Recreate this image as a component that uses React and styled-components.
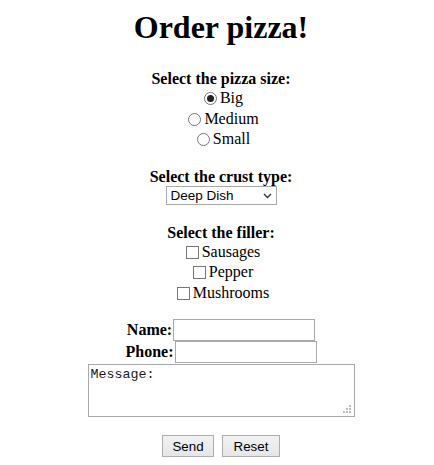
import React from "react";
import styled, { createGlobalStyle } from "styled-components";

const GlobalStyle = createGlobalStyle`
  body {
    margin: 8px;
    background: #ffffff;
    color: #000000;
    font-family: "Liberation Serif", "Times New Roman", serif;
    font-size: 16px;
  }
`;

const Page = styled.div`
  display: flex;
  flex-direction: column;
  align-items: center;
  padding: 1px 0 0 8px;
`;

const Title = styled.h1`
  font-size: 32px;
  font-weight: bold;
  line-height: 37px;
  margin: 0 0 24px;
`;

const Form = styled.form`
  display: flex;
  flex-direction: column;
  align-items: center;
  width: 100%;
`;

const Group = styled.div`
  display: flex;
  flex-direction: column;
  align-items: center;
  margin-bottom: ${({ gap }) => gap ?? 18}px;
`;

const GroupLabel = styled.b`
  display: block;
  line-height: 18px;
`;

const Option = styled.label`
  display: flex;
  align-items: center;
  height: 20.5px;
  line-height: 18px;
`;

const Radio = styled.input.attrs({ type: "radio" })`
  appearance: none;
  width: 13px;
  height: 13px;
  margin: 1px 3px 0 5px;
  border: 1px solid #767676;
  border-radius: 50%;
  background: #fff;
  box-sizing: border-box;
  position: relative;

  &:checked::after {
    content: "";
    position: absolute;
    left: 2px;
    top: 2px;
    width: 7px;
    height: 7px;
    border-radius: 50%;
    background: #222;
  }
`;

const Checkbox = styled.input.attrs({ type: "checkbox" })`
  appearance: none;
  width: 13px;
  height: 13px;
  margin: 1px 3px 0 4px;
  border: 1px solid #767676;
  border-radius: 0;
  background: #fff;
  box-sizing: border-box;
`;

const SelectWrap = styled.div`
  position: relative;
  height: 19px;

  svg {
    position: absolute;
    right: 5px;
    top: 7px;
    pointer-events: none;
  }
`;

const Select = styled.select`
  appearance: none;
  width: 111px;
  height: 19px;
  margin: 0;
  padding: 0 0 0 4px;
  border: 1px solid #a9a9a9;
  border-radius: 0;
  background: #fff;
  font-family: "Liberation Sans", Arial, sans-serif;
  font-size: 13.5px;
  color: #000;
`;

const FieldRow = styled.div`
  display: flex;
  align-items: center;
  height: 22px;
`;

const FieldLabel = styled.b`
  margin-right: 1px;
`;

const TextInput = styled.input`
  width: 142px;
  height: 22px;
  box-sizing: border-box;
  border: 1px solid #a9a9a9;
  border-radius: 0;
  padding: 1px 2px;
  font-family: "Liberation Sans", Arial, sans-serif;
  font-size: 13.33px;
  margin: 0;
`;

const Message = styled.textarea`
  width: 267px;
  height: 53px;
  box-sizing: border-box;
  margin: 1px 0 0;
  padding: 2px;
  border: 1px solid #a9a9a9;
  border-radius: 0;
  font-family: "Liberation Mono", "Courier New", monospace;
  font-size: 13.33px;
  color: #000;
  resize: both;

  &::placeholder {
    color: #1a1a1a;
    opacity: 1;
  }

  /* dotted grip in the corner */
  &::-webkit-resizer {
    background-color: #fff;
    background-image:
      linear-gradient(#bdbdbd, #bdbdbd), linear-gradient(#bdbdbd, #bdbdbd),
      linear-gradient(#bdbdbd, #bdbdbd), linear-gradient(#bdbdbd, #bdbdbd),
      linear-gradient(#bdbdbd, #bdbdbd), linear-gradient(#bdbdbd, #bdbdbd);
    background-size: 2px 2px;
    background-repeat: no-repeat;
    background-position:
      right 3px bottom 3px, right 6px bottom 3px, right 9px bottom 3px,
      right 3px bottom 6px, right 6px bottom 6px,
      right 3px bottom 9px;
  }
`;

const Buttons = styled.div`
  display: flex;
  gap: 8px;
  margin-top: 18px;
`;

const Button = styled.button`
  height: 22px;
  padding: 0;
  border: 1px solid #adadad;
  border-radius: 0;
  background: linear-gradient(#f2f2f2, #e6e6e6);
  font-family: "Liberation Sans", Arial, sans-serif;
  font-size: 13.33px;
  color: #000;
  width: ${({ w }) => w}px;
`;

const Chevron = () => (
  <svg width="9" height="6" viewBox="0 0 9 6">
    <path d="M1 1l3.5 3.5L8 1" fill="none" stroke="#333" strokeWidth="1.4" />
  </svg>
);

const sizes = ["Big", "Medium", "Small"];
const fillers = ["Sausages", "Pepper", "Mushrooms"];

export default function App() {
  return (
    <>
      <GlobalStyle />
      <Page>
        <Title>Order pizza!</Title>
        <Form onSubmit={(e) => e.preventDefault()}>
          <Group>
            <GroupLabel>Select the pizza size:</GroupLabel>
            {sizes.map((s) => (
              <Option key={s}>
                <Radio name="size" defaultChecked={s === "Big"} />
                {s}
              </Option>
            ))}
          </Group>

          <Group gap={19}>
            <GroupLabel>Select the crust type:</GroupLabel>
            <SelectWrap>
              <Select defaultValue="deep">
                <option value="deep">Deep Dish</option>
                <option value="thin">Thin Crust</option>
                <option value="classic">Classic</option>
              </Select>
              <Chevron />
            </SelectWrap>
          </Group>

          <Group gap={16}>
            <GroupLabel>Select the filler:</GroupLabel>
            {fillers.map((f) => (
              <Option key={f}>
                <Checkbox />
                {f}
              </Option>
            ))}
          </Group>

          <FieldRow>
            <FieldLabel>Name:</FieldLabel>
            <TextInput type="text" />
          </FieldRow>
          <FieldRow>
            <FieldLabel>Phone:</FieldLabel>
            <TextInput type="text" />
          </FieldRow>
          <Message placeholder="Message:" />

          <Buttons>
            <Button type="submit" w={52}>Send</Button>
            <Button type="reset" w={58}>Reset</Button>
          </Buttons>
        </Form>
      </Page>
    </>
  );
}
